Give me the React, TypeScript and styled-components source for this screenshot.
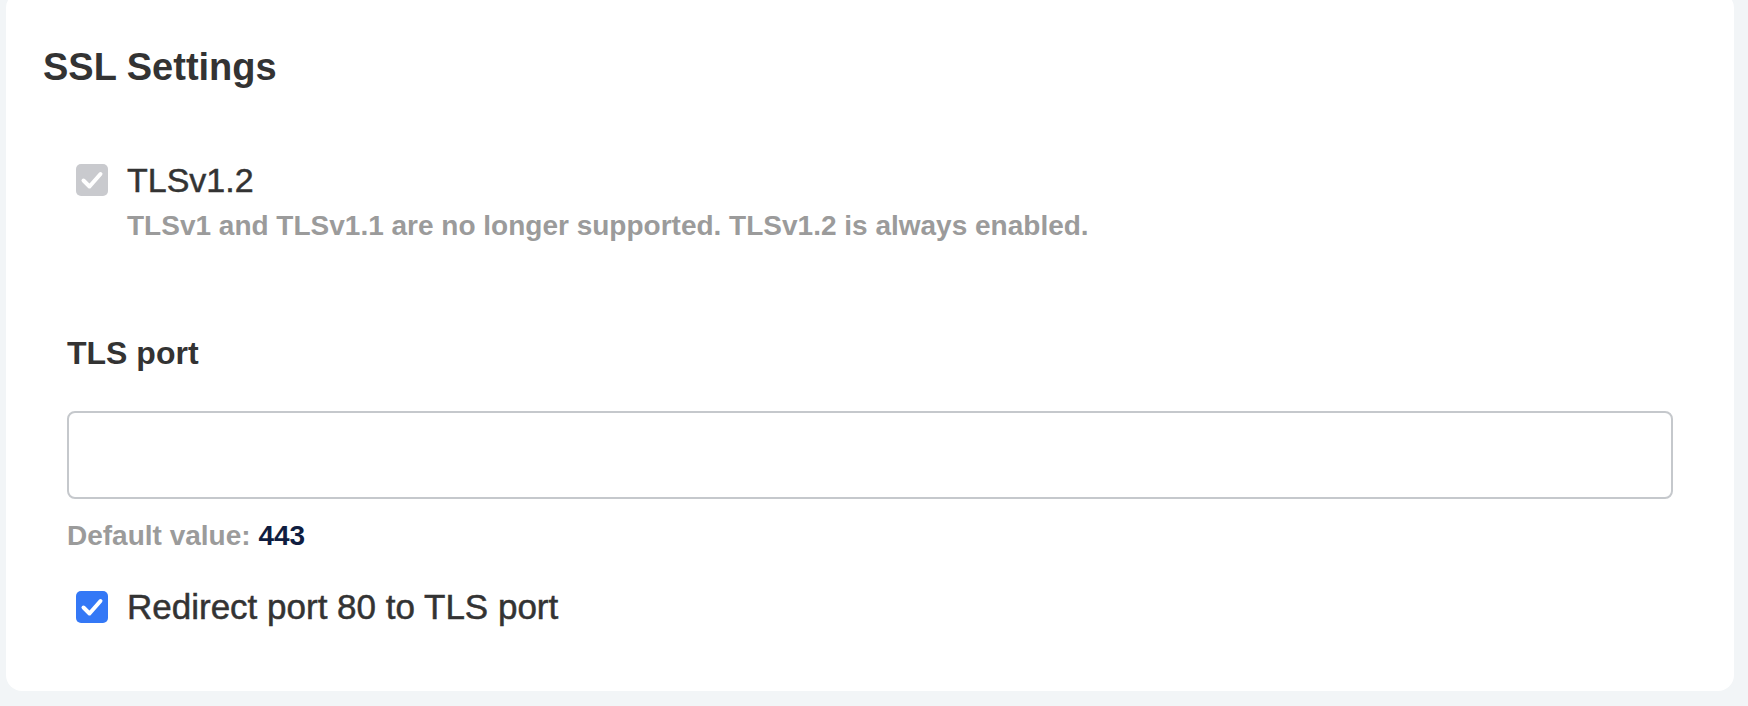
import React, {FC, useState} from 'react';
import styled, {createGlobalStyle} from "styled-components";

const GlobalStyle = createGlobalStyle`
  html, body {
    margin: 0;
    padding: 0;
    background: #F2F5F7;
    font-family: "Liberation Sans", Arial, Helvetica, sans-serif;
  }
`

type CheckType = {
    checked: boolean
    disabled?: boolean
    onToggle?: () => void
}
const Check: FC<CheckType> = ({checked, disabled, onToggle}) => (
    <StBox $checked={checked} $disabled={disabled} onClick={disabled ? undefined : onToggle}>
        {checked && (
            <svg width="32" height="32" viewBox="0 0 32 32">
                <polyline points="7.5,16.5 13.5,22.5 24.5,10" fill="none" stroke="#fff" strokeWidth="4"
                          strokeLinecap="round" strokeLinejoin="round"/>
            </svg>
        )}
    </StBox>
)

const App: FC = () => {
    const [redirect, setRedirect] = useState(true)
    const [port, setPort] = useState('')
    return (
        <StPage>
            <GlobalStyle/>
            <StCard>
                <StTitle>SSL Settings</StTitle>
                <StForm>
                    <StOption>
                        <StRow>
                            <Check checked disabled/>
                            <StRowLabel $size={34}>TLSv1.2</StRowLabel>
                        </StRow>
                        <StHint>TLSv1 and TLSv1.1 are no longer supported. TLSv1.2 is always enabled.</StHint>
                    </StOption>
                    <StLabel htmlFor="tls-port">TLS port</StLabel>
                    <StInput id="tls-port" type="text" value={port} onChange={e => setPort(e.currentTarget.value)}/>
                    <StDefault>Default value: <span>443</span></StDefault>
                    <StRow className={'redirect'}>
                        <Check checked={redirect} onToggle={() => setRedirect(!redirect)}/>
                        <StRowLabel $size={35}>Redirect port 80 to TLS port</StRowLabel>
                    </StRow>
                </StForm>
            </StCard>
        </StPage>
    );
};

export default App

const StPage = styled.div`
  min-height: 706px;
  padding: 0 14px 0 6px;
  overflow: hidden;
`

const StCard = styled.div`
  margin-top: -8px;
  background: #FFFFFF;
  border-radius: 16px;
  padding: 53px 61px 64px 37px;
`

const StTitle = styled.h2`
  margin: 0;
  font-size: 38px;
  line-height: 44px;
  font-weight: 700;
  color: #333333;
`

const StForm = styled.div`
  display: flex;
  flex-direction: column;
  padding-left: 24px;
  .redirect{
    margin-top: 34px;
    padding-left: 9px;
  }
`

const StOption = styled.div`
  display: flex;
  flex-direction: column;
  margin-top: 71px;
  padding-left: 9px;
`

const StRow = styled.div`
  display: flex;
  align-items: center;
  gap: 19px;
  height: 40px;
`

const StBox = styled.div<{ $checked: boolean, $disabled?: boolean }>`
  width: 32px;
  height: 32px;
  flex: none;
  border-radius: 5px;
  box-sizing: border-box;
  display: flex;
  background: ${p => p.$disabled ? '#C9CACE' : p.$checked ? '#3478F6' : '#FFFFFF'};
  border: ${p => p.$checked || p.$disabled ? 'none' : '2px solid #C5C8CC'};
  cursor: ${p => p.$disabled ? 'default' : 'pointer'};
`

const StRowLabel = styled.span<{ $size: number }>`
  font-size: ${p => p.$size}px;
  line-height: 40px;
  color: #333333;
  -webkit-text-stroke: 0.5px #333333;
`

const StHint = styled.p`
  margin: 10px 0 0 51px;
  font-size: 28px;
  line-height: 32px;
  font-weight: 700;
  color: #9B9B9B;
`

const StLabel = styled.label`
  margin-top: 92px;
  font-size: 32px;
  line-height: 38px;
  font-weight: 700;
  color: #333333;
`

const StInput = styled.input`
  margin-top: 39px;
  height: 88px;
  box-sizing: border-box;
  width: 100%;
  border: 2px solid #C5C8CC;
  border-radius: 8px;
  padding: 0 20px;
  font: inherit;
  font-size: 30px;
  outline: none;
`

const StDefault = styled.div`
  margin-top: 20px;
  font-size: 28px;
  line-height: 34px;
  font-weight: 700;
  color: #9B9B9B;
  & span{
    color: #0F1D40;
  }
`
